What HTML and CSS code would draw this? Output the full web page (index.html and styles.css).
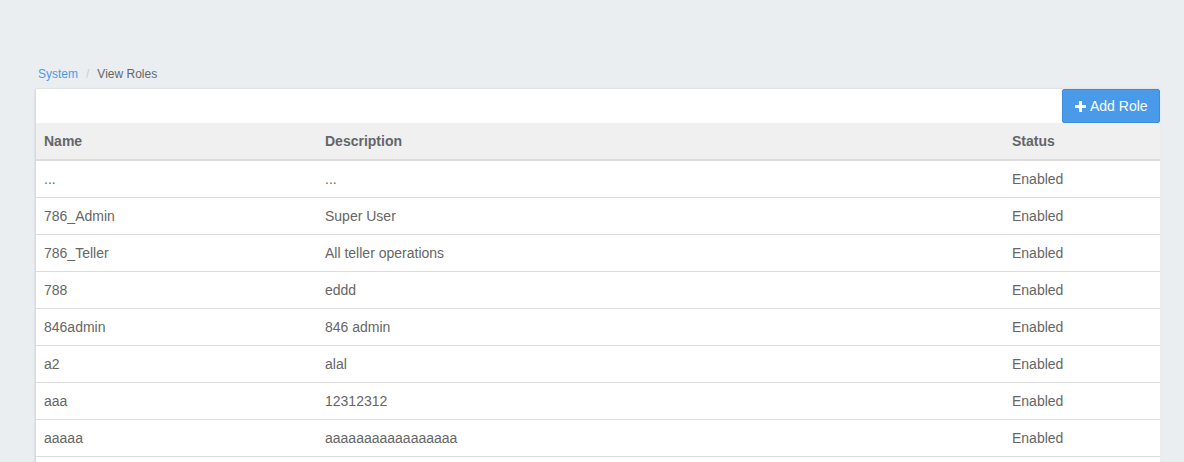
FILE: index.html
```html
<!DOCTYPE html>
<html>
<head>
<meta charset="utf-8">
<link rel="stylesheet" href="styles.css">
</head>
<body>
<div class="page">
  <nav class="crumbs"><a class="crumb-link">System</a><span class="sep">/</span><span class="crumb-cur">View Roles</span></nav>
  <div class="card">
    <div class="toolbar">
      <button class="btn-add"><svg class="plus" viewBox="0 0 10 10" width="11" height="11"><path d="M3.6 0h2.8v3.6H10v2.8H6.4V10H3.6V6.4H0V3.6h3.6z" fill="#fff"/></svg>Add Role</button>
    </div>
    <table class="roles">
      <thead>
        <tr><th class="c-name">Name</th><th class="c-desc">Description</th><th class="c-status">Status</th></tr>
      </thead>
      <tbody>
        <tr><td>...</td><td>...</td><td>Enabled</td></tr>
        <tr><td>786_Admin</td><td>Super User</td><td>Enabled</td></tr>
        <tr><td>786_Teller</td><td>All teller operations</td><td>Enabled</td></tr>
        <tr><td>788</td><td>eddd</td><td>Enabled</td></tr>
        <tr><td>846admin</td><td>846 admin</td><td>Enabled</td></tr>
        <tr><td>a2</td><td>alal</td><td>Enabled</td></tr>
        <tr><td>aaa</td><td>12312312</td><td>Enabled</td></tr>
        <tr><td>aaaaa</td><td>aaaaaaaaaaaaaaaaa</td><td>Enabled</td></tr>
        <tr class="tail"><td></td><td></td><td></td></tr>
      </tbody>
    </table>
  </div>
</div>
</body>
</html>
```
FILE: styles.css
```css
html, body {
  margin: 0;
  padding: 0;
  background: #ebeef1;
  font-family: "Liberation Sans", Arial, sans-serif;
  overflow: hidden;
  height: 462px;
}
.page {
  padding: 67px 24px 0 36px;
}
.crumbs {
  font-size: 12px;
  line-height: 14px;
  padding-left: 2px;
  margin-bottom: 8px;
  color: #666;
}
.crumb-link {
  color: #4a9aea;
}
.sep {
  color: #ccc;
  padding: 0 8px;
}
.crumb-cur {
  color: #666;
}
.card {
  background: #fff;
  box-shadow: -1px 0 2px rgba(0,0,0,0.12);
}
.toolbar {
  display: flex;
  justify-content: flex-end;
  height: 34px;
}
.btn-add {
  display: flex;
  align-items: center;
  gap: 4px;
  height: 34px;
  width: 98px;
  padding: 0 0 0 12px;
  background: #4a9aea;
  border: 1px solid #3d8ddd;
  border-radius: 2px;
  color: #fff;
  font-family: "Liberation Sans", Arial, sans-serif;
  font-size: 14px;
}
.plus {
  display: block;
}
.roles {
  width: 100%;
  border-collapse: collapse;
  font-size: 14px;
  color: #666;
}
.roles th {
  background: #f0f0f0;
  color: #62666b;
  font-weight: bold;
  text-align: left;
  height: 36px;
  padding: 0 8px;
  border-bottom: 2px solid #ddd;
}
.roles td {
  height: 36px;
  padding: 0 8px;
  border-bottom: 1px solid #ddd;
}
.c-name { width: 265px; }
.c-desc { width: 671px; }
```
